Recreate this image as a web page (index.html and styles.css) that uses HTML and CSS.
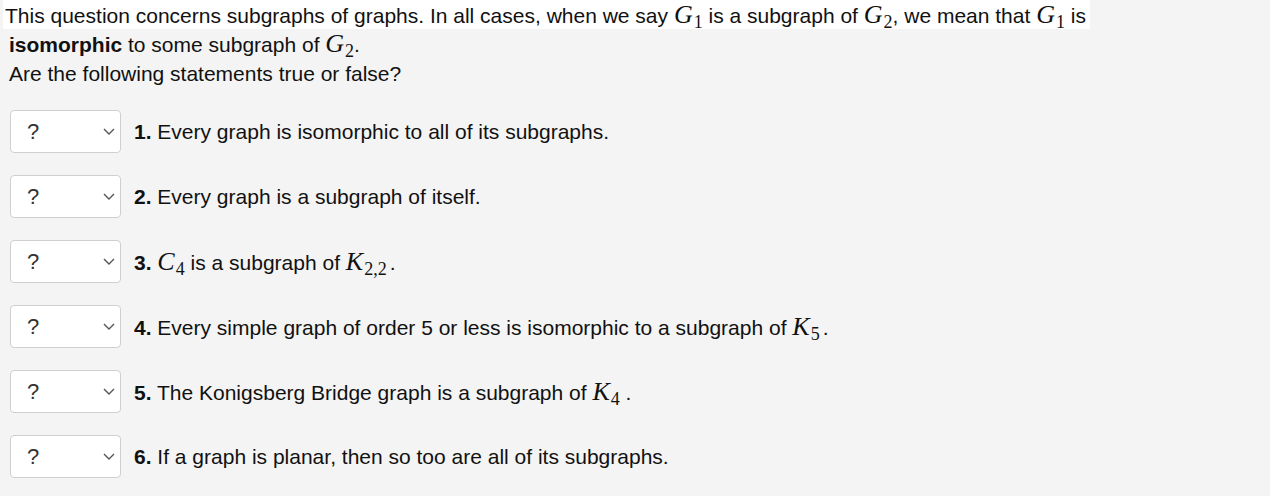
FILE: index.html
```html
<!DOCTYPE html>
<html>
<head>
<meta charset="utf-8">
<link rel="stylesheet" href="styles.css">
</head>
<body>
<div class="page">
  <div class="intro">
    <div class="line first">This question concerns subgraphs of graphs. In all cases, when we say <span class="m">G<sub>1</sub></span> is a subgraph of <span class="m">G<sub>2</sub></span>, we mean that <span class="m">G<sub>1</sub></span> is</div>
    <div class="line"><b>isomorphic</b> to some subgraph of <span class="m">G<sub>2</sub></span>.</div>
    <div class="line">Are the following statements true or false?</div>
  </div>
  <div class="items">
    <div class="item">
      <div class="sel"><span class="q">?</span><svg class="chev" width="12" height="7" viewBox="0 0 12 7"><path d="M1 1 L6 6 L11 1" fill="none" stroke="#555" stroke-width="1.4"/></svg></div>
      <div class="stmt"><b>1.</b> Every graph is isomorphic to all of its subgraphs.</div>
    </div>
    <div class="item">
      <div class="sel"><span class="q">?</span><svg class="chev" width="12" height="7" viewBox="0 0 12 7"><path d="M1 1 L6 6 L11 1" fill="none" stroke="#555" stroke-width="1.4"/></svg></div>
      <div class="stmt"><b>2.</b> Every graph is a subgraph of itself.</div>
    </div>
    <div class="item">
      <div class="sel"><span class="q">?</span><svg class="chev" width="12" height="7" viewBox="0 0 12 7"><path d="M1 1 L6 6 L11 1" fill="none" stroke="#555" stroke-width="1.4"/></svg></div>
      <div class="stmt"><b>3.</b> <span class="m">C<sub>4</sub></span> is a subgraph of <span class="m">K<sub>2,2</sub></span><span class="dot">.</span></div>
    </div>
    <div class="item">
      <div class="sel"><span class="q">?</span><svg class="chev" width="12" height="7" viewBox="0 0 12 7"><path d="M1 1 L6 6 L11 1" fill="none" stroke="#555" stroke-width="1.4"/></svg></div>
      <div class="stmt"><b>4.</b> Every simple graph of order 5 or less is isomorphic to a subgraph of <span class="m">K<sub>5</sub></span><span class="dot">.</span></div>
    </div>
    <div class="item">
      <div class="sel"><span class="q">?</span><svg class="chev" width="12" height="7" viewBox="0 0 12 7"><path d="M1 1 L6 6 L11 1" fill="none" stroke="#555" stroke-width="1.4"/></svg></div>
      <div class="stmt"><b>5.</b> The Konigsberg Bridge graph is a subgraph of <span class="m">K<sub>4</sub></span> .</div>
    </div>
    <div class="item">
      <div class="sel"><span class="q">?</span><svg class="chev" width="12" height="7" viewBox="0 0 12 7"><path d="M1 1 L6 6 L11 1" fill="none" stroke="#555" stroke-width="1.4"/></svg></div>
      <div class="stmt"><b>6.</b> If a graph is planar, then so too are all of its subgraphs.</div>
    </div>
  </div>
</div>
</body>
</html>
```
FILE: styles.css
```css
html, body {
  margin: 0;
  padding: 0;
  background: #f4f4f4;
}
.page {
  font-family: "Liberation Sans", Arial, sans-serif;
  font-size: 21px;
  color: #111;
  width: 1270px;
  height: 496px;
  overflow: hidden;
}
.intro {
  padding-left: 9px;
}
.line {
  height: 29.5px;
  line-height: 29.5px;
  white-space: nowrap;
}
.line.first {
  margin-left: -6px;
  padding-left: 2px;
  padding-right: 4px;
  background: #fff;
  width: fit-content;
  height: 29px;
}
.m {
  font-family: "Liberation Serif", "Times New Roman", serif;
  font-style: italic;
  font-size: 26px;
}
.m sub {
  font-style: normal;
  font-size: 18px;
  vertical-align: -5px;
  line-height: 0;
  margin-left: 1px;
}
.dot {
  margin-left: 3px;
}
.items {
  display: flex;
  flex-direction: column;
  gap: 22px;
  padding-left: 10px;
  padding-top: 22px;
}
.item {
  display: flex;
  align-items: center;
  gap: 13px;
}
.sel {
  box-sizing: border-box;
  width: 111px;
  height: 43px;
  background: #fff;
  border: 1px solid #cfcfcf;
  border-radius: 4px;
  display: flex;
  align-items: center;
  justify-content: space-between;
  padding: 0 5px 0 16px;
}
.q {
  color: #333;
  font-size: 22px;
}
.chev {
  display: block;
}
.stmt {
  white-space: nowrap;
}
```
